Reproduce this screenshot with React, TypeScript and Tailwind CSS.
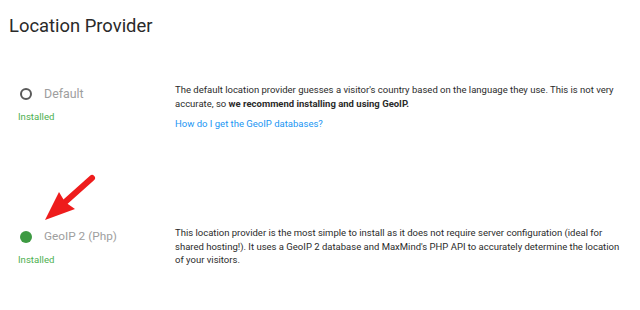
export default function App() {
    return (
        <div className="relative w-[640px] h-[310px] bg-white overflow-hidden" style={{ fontFamily: 'Roboto, "Liberation Sans", sans-serif' }}>
            {/* Title */}
            <h1 className="pl-[9px] pt-[12px] text-[18.4px] leading-[28px] text-[#2a2a2a]">Location Provider</h1>

            {/* Default provider */}
            <div className="flex mt-[46px]">
                <div className="w-[175px] shrink-0 pl-[18px]">
                    <label className="flex items-center h-[16px]">
                        <span className="w-[12px] h-[12px] ml-[2px] rounded-full border-2 border-[#5a5a5a]" />
                        <span className="ml-[12px] text-[12.4px] text-[#9e9e9e]">Default</span>
                    </label>
                    <div className="mt-[8px] text-[9.6px] text-[#4caf50]">Installed</div>
                </div>
                <div className="flex-1 pr-[20px] -mt-[3px] text-[9.5px] leading-[14px] text-[#2b2b2b]">
                    <p>
                        The default location provider guesses a visitor's country based on the language they use. This is not very accurate, so <b>we recommend installing and using GeoIP.</b>
                    </p>
                    <a className="block mt-[6px] text-[#2196f3]">How do I get the GeoIP databases?</a>
                </div>
            </div>

            {/* GeoIP 2 provider */}
            <div className="flex mt-[98px]">
                <div className="w-[175px] shrink-0 pl-[18px]">
                    <label className="flex items-center h-[16px]">
                        <span className="w-[12px] h-[12px] ml-[2px] rounded-full bg-[#3d9a42]" />
                        <span className="ml-[12px] text-[11.8px] text-[#9e9e9e]">GeoIP 2 (Php)</span>
                    </label>
                    <div className="mt-[8px] text-[9.6px] text-[#4caf50]">Installed</div>
                </div>
                <div className="flex-1 pr-[20px] -mt-[3px] text-[9.5px] leading-[13.6px] text-[#2b2b2b]">
                    <p>
                        This location provider is the most simple to install as it does not require server configuration (ideal for shared hosting!). It uses a GeoIP 2 database and MaxMind's PHP API to accurately determine the location of your visitors.
                    </p>
                </div>
            </div>

            {/* Red annotation arrow */}
            <svg className="absolute left-0 top-0 pointer-events-none" width="640" height="310" viewBox="0 0 640 310">
                <line x1="92" y1="178" x2="64" y2="203" stroke="#ee1c1c" strokeWidth="6" strokeLinecap="round" />
                <polygon points="45,220 59,192 65,202 75,209" fill="#ee1c1c" />
            </svg>
        </div>
    );
}
